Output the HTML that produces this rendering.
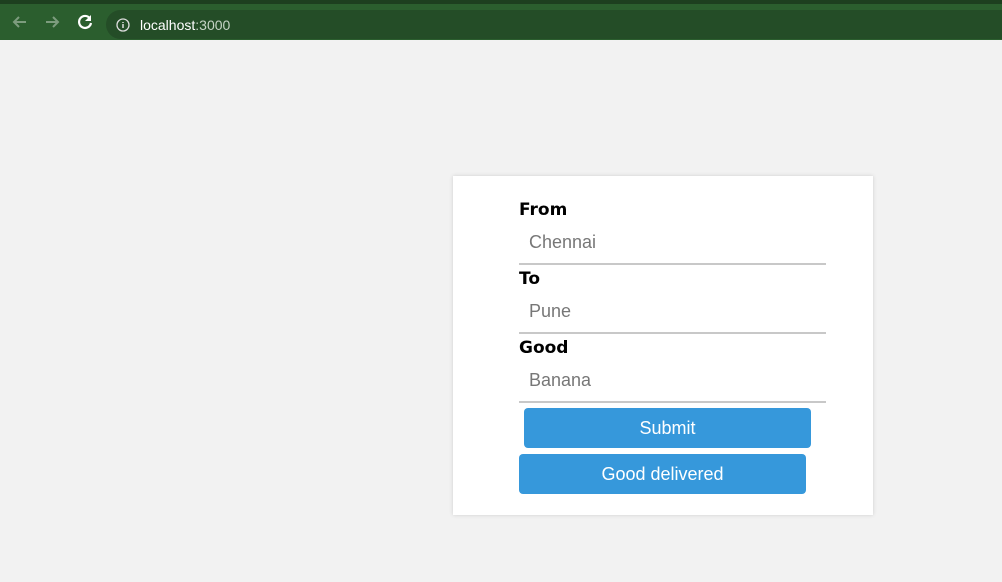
<!DOCTYPE html>
<html><head><style>
*{margin:0;padding:0;box-sizing:border-box}
body{width:1002px;height:582px;background:#f2f2f2;font-family:"Liberation Sans",sans-serif;position:relative;overflow:hidden}
.top{position:absolute;left:0;top:0;width:1002px;height:4px;background:#1d3f1f}
.bar{position:absolute;left:0;top:4px;width:1002px;height:36px;background:#2b5e2e}
.url{position:absolute;left:106px;top:6px;width:896px;height:29px;background:#244d27;border-radius:15px 0 0 15px}
.url span{position:absolute;left:34px;top:7px;font-size:14px;color:#fff}
.url span i{font-style:normal;color:#c6d4c6}
.card{position:absolute;left:453px;top:176px;width:420px;height:339px;background:#fff;box-shadow:0 0 4px rgba(0,0,0,.15)}
.lab{position:absolute;left:519px;font-weight:bold;font-size:18px;color:#000;font-family:"DejaVu Sans",sans-serif;font-size:17px}
.val{position:absolute;left:529px;font-size:18px;color:#777}
.line{position:absolute;left:519px;width:307px;height:2px;background:#c8c8c8}
.btn{position:absolute;width:287px;height:40px;background:#3698db;border-radius:4px;color:#fff;font-size:18px;text-align:center;line-height:40px}
</style></head><body>
<div class="top"></div><div class="bar">
<svg style="position:absolute;left:10px;top:8px" width="20" height="20" viewBox="0 0 20 20"><path d="M16 10H4M9 5L4 10l5 5" stroke="#7d9c7e" stroke-width="2" fill="none"/></svg>
<svg style="position:absolute;left:42px;top:8px" width="20" height="20" viewBox="0 0 20 20"><path d="M4 10h12M11 5l5 5-5 5" stroke="#7d9c7e" stroke-width="2" fill="none"/></svg>
<svg style="position:absolute;left:75px;top:8px" width="20" height="20" viewBox="0 0 20 20"><path d="M15 6.5A6 6 0 1 0 16 11" stroke="#fff" stroke-width="2.2" fill="none"/><path d="M16 3v6h-6z" fill="#fff"/></svg>
<div class="url"><svg style="position:absolute;left:10px;top:8px" width="14" height="14" viewBox="0 0 14 14"><circle cx="7" cy="7" r="6" stroke="#ddd" stroke-width="1.3" fill="none"/><path d="M7 6v4M7 4v1" stroke="#ddd" stroke-width="1.5"/></svg><span>localhost<i>:3000</i></span></div>
</div>
<div class="card"></div>
<div class="lab" style="top:200px">From</div>
<div class="val" style="top:232px">Chennai</div>
<div class="line" style="top:263px"></div>
<div class="lab" style="top:269px">To</div>
<div class="val" style="top:301px">Pune</div>
<div class="line" style="top:332px"></div>
<div class="lab" style="top:338px">Good</div>
<div class="val" style="top:370px">Banana</div>
<div class="line" style="top:401px"></div>
<div class="btn" style="left:524px;top:408px">Submit</div>
<div class="btn" style="left:519px;top:454px">Good delivered</div>
</body></html>
